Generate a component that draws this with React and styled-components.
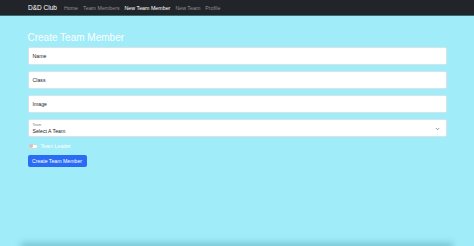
import React from "react";
import styled, { createGlobalStyle } from "styled-components";

const Global = createGlobalStyle`
  html, body { margin: 0; padding: 0; }
  body {
    background: #a0ecf9;
    font-family: "Liberation Sans", Arial, sans-serif;
    overflow: hidden;
  }
  * { box-sizing: border-box; }
`;

const Page = styled.div`
  display: flex;
  flex-direction: column;
  height: 246px;
`;

const Navbar = styled.nav`
  height: 16px;
  flex: none;
  background: #212529;
  border-bottom: 1px solid #3a6b76;
  display: flex;
  align-items: center;
  padding-left: 28px;
`;

const Brand = styled.span`
  color: #ffffff;
  font-size: 6.5px;
  margin-right: 7px;
`;

const NavLinks = styled.div`
  display: flex;
  gap: 5px;
`;

const NavLink = styled.span`
  font-size: 5.3px;
  color: ${(p) => (p.$active ? "#ffffff" : "#8d9093")};
`;

const Main = styled.main`
  flex: 1;
  width: 419px;
  margin: 0 auto;
  padding-top: 15px;
`;

const Title = styled.h1`
  margin: 0 0 3px 0;
  font-size: 10px;
  line-height: 13px;
  font-weight: 500;
  color: #ffffff;
`;

const Form = styled.form`
  display: flex;
  flex-direction: column;
  gap: 6px;
`;

const Field = styled.div`
  height: 18px;
  background: #ffffff;
  border: 0.5px solid #d7e3e6;
  border-radius: 2px;
  display: flex;
  flex-direction: column;
  justify-content: center;
  padding: 0 4px;
  position: relative;
`;

const FieldText = styled.span`
  font-size: 5.2px;
  color: #212529;
`;

const SmallLabel = styled.span`
  font-size: 3.6px;
  color: #7a8086;
  margin-bottom: 1px;
`;

const Chevron = styled.svg`
  position: absolute;
  right: 6px;
  top: 7px;
  width: 5px;
  height: 4px;
`;

const SwitchRow = styled.div`
  display: flex;
  align-items: center;
  gap: 3px;
  margin: -1.5px 0;
  height: 9px;
`;

const Switch = styled.span`
  width: 10px;
  height: 5px;
  border-radius: 3px;
  background: #ffffff;
  border: 0.5px solid #cfd8da;
  display: flex;
  align-items: center;
  padding-left: 0.7px;
`;

const Knob = styled.span`
  width: 3.6px;
  height: 3.6px;
  border-radius: 50%;
  background: #c4c8cc;
`;

const SwitchLabel = styled.span`
  font-size: 5.2px;
  color: #ffffff;
`;

const Button = styled.button`
  align-self: flex-start;
  height: 12px;
  width: 59px;
  padding: 0;
  border: none;
  border-radius: 2px;
  background: #2a6df4;
  color: #ffffff;
  font-family: "Liberation Sans", Arial, sans-serif;
  font-size: 5.2px;
`;

const BottomShade = styled.div`
  flex: none;
  height: 0;
  margin: 0 24px;
  box-shadow: 0 0 6px 3px rgba(40, 110, 130, 0.35);
`;

export default function App() {
  const links = ["Home", "Team Members", "New Team Member", "New Team", "Profile"];
  return (
    <>
      <Global />
      <Page>
        <Navbar>
          <Brand>D&amp;D Club</Brand>
          <NavLinks>
            {links.map((l) => (
              <NavLink key={l} $active={l === "New Team Member"}>
                {l}
              </NavLink>
            ))}
          </NavLinks>
        </Navbar>
        <Main>
          <Title>Create Team Member</Title>
          <Form onSubmit={(e) => e.preventDefault()}>
            <Field>
              <FieldText>Name</FieldText>
            </Field>
            <Field>
              <FieldText>Class</FieldText>
            </Field>
            <Field>
              <FieldText>Image</FieldText>
            </Field>
            <Field>
              <SmallLabel>Team</SmallLabel>
              <FieldText>Select A Team</FieldText>
              <Chevron viewBox="0 0 16 16">
                <path d="M2 5l6 6 6-6" fill="none" stroke="#343a40" strokeWidth="2" strokeLinecap="round" strokeLinejoin="round" />
              </Chevron>
            </Field>
            <SwitchRow>
              <Switch>
                <Knob />
              </Switch>
              <SwitchLabel>Team Leader</SwitchLabel>
            </SwitchRow>
            <Button type="submit">Create Team Member</Button>
          </Form>
        </Main>
        <BottomShade />
      </Page>
    </>
  );
}
